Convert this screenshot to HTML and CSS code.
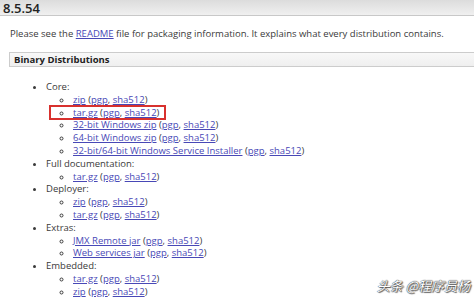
FILE: index.html
```html
<!DOCTYPE html>
<html lang="en">
<head>
    <meta charset="UTF-8">
    <meta name="viewport" content="width=device-width, initial-scale=1.0">
    <title>Tomcat 8.5.54 Downloads</title>
    <link rel="stylesheet" href="styles.css">
</head>
<body>
    <h2 class="version">8.5.54</h2>
    <p class="intro">Please see the <a href="#">README</a> file for packaging information. It explains what every distribution contains.</p>

    <div class="section">
        <h3 class="section-title">Binary Distributions</h3>
        <ul class="dist">
            <li>Core:
                <ul>
                    <li><a href="#">zip</a> (<a href="#">pgp</a>, <a href="#">sha512</a>)</li>
                    <li class="marked"><a href="#">tar.gz</a> (<a href="#">pgp</a>, <a href="#">sha512</a>)</li>
                    <li><a href="#">32-bit Windows zip</a> (<a href="#">pgp</a>, <a href="#">sha512</a>)</li>
                    <li><a href="#">64-bit Windows zip</a> (<a href="#">pgp</a>, <a href="#">sha512</a>)</li>
                    <li><a href="#">32-bit/64-bit Windows Service Installer</a> (<a href="#">pgp</a>, <a href="#">sha512</a>)</li>
                </ul>
            </li>
            <li>Full documentation:
                <ul>
                    <li><a href="#">tar.gz</a> (<a href="#">pgp</a>, <a href="#">sha512</a>)</li>
                </ul>
            </li>
            <li>Deployer:
                <ul>
                    <li><a href="#">zip</a> (<a href="#">pgp</a>, <a href="#">sha512</a>)</li>
                    <li><a href="#">tar.gz</a> (<a href="#">pgp</a>, <a href="#">sha512</a>)</li>
                </ul>
            </li>
            <li>Extras:
                <ul>
                    <li><a href="#">JMX Remote jar</a> (<a href="#">pgp</a>, <a href="#">sha512</a>)</li>
                    <li><a href="#">Web services jar</a> (<a href="#">pgp</a>, <a href="#">sha512</a>)</li>
                </ul>
            </li>
            <li>Embedded:
                <ul>
                    <li><a href="#">tar.gz</a> (<a href="#">pgp</a>, <a href="#">sha512</a>)</li>
                    <li><a href="#">zip</a> (<a href="#">pgp</a>, <a href="#">sha512</a>)</li>
                </ul>
            </li>
        </ul>
    </div>

    <div class="watermark">头条 @程序员杨</div>
</body>
</html>
```

FILE: styles.css
```css
body {
    margin: 0;
    font-family: "Open Sans", "Liberation Sans", sans-serif;
    font-size: 9.5px;
    color: #3a3a3a;
    background-color: #fff;
    position: relative;
    height: 298px;
    overflow: hidden;
}
a {
    color: #4848b6;
    text-decoration: underline;
}
.version {
    margin: 0;
    height: 15px;
    padding-left: 3px;
    font-size: 13px;
    font-weight: 600;
    line-height: 16px;
    color: #222;
    background: linear-gradient(#dcdcdc, #f0f0f0);
    border-bottom: 1px solid #c8c8c8;
}
.intro {
    margin: 11px 0 0 10px;
    line-height: 13px;
    white-space: nowrap;
}
.section {
    margin-top: 12px;
}
.section-title {
    margin: 0 0 0 9px;
    height: 13px;
    padding-left: 4px;
    font-size: 9.5px;
    font-weight: 700;
    line-height: 13px;
    color: #222;
    background: linear-gradient(#f8f8f8, #efefef);
    border: 1px solid #cccccc;
    border-right: none;
}
.dist {
    margin: 14px 0 0;
    padding-left: 46px;
    list-style: disc;
    line-height: 12.8px;
}
.dist ul {
    margin: 0;
    padding-left: 27px;
    list-style: circle;
}
.marked {
    position: relative;
    width: fit-content;
}
/* red highlight drawn over the tar.gz row */
.marked::after {
    content: "";
    position: absolute;
    left: -24px;
    right: -7px;
    top: -2px;
    bottom: -1px;
    border: 2px solid #d8312e;
}
.watermark {
    position: absolute;
    right: 4px;
    bottom: 3px;
    font-family: "Noto Sans CJK SC", sans-serif;
    font-size: 13px;
    font-style: italic;
    color: #fff;
    text-shadow: 0 0 1px #333, 0 0 1px #333, 1px 1px 1px #555;
}
```
